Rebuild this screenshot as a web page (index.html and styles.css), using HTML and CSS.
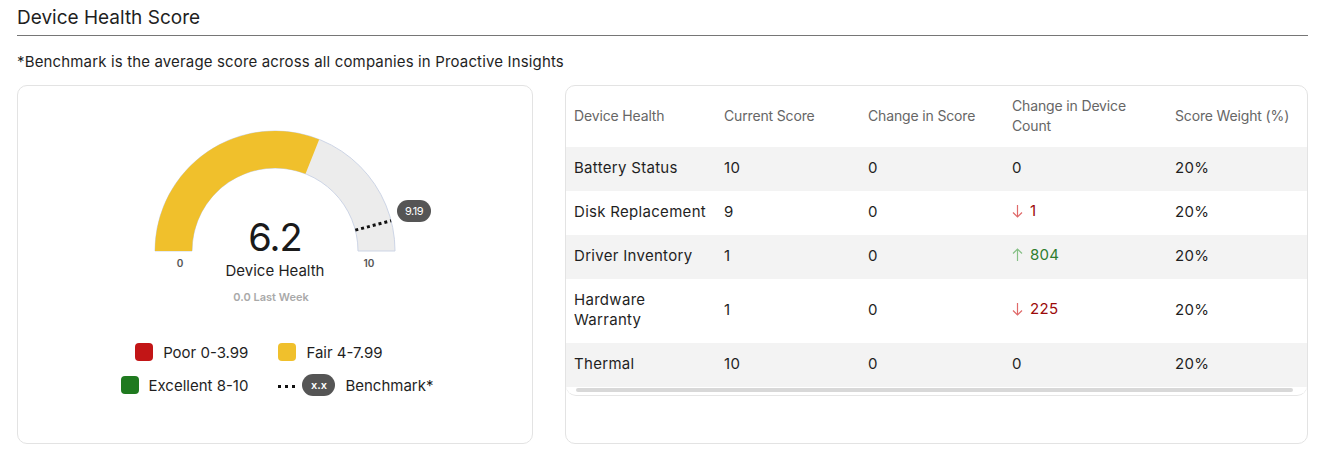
FILE: index.html
```html
<!DOCTYPE html>
<html lang="en">
<head>
<meta charset="utf-8">
<title>Device Health Score</title>
<link rel="stylesheet" href="styles.css">
</head>
<body>
<div class="page">
  <h1 class="title">Device Health Score</h1>
  <p class="note">*Benchmark is the average score across all companies in Proactive Insights</p>
  <div class="cards">
    <section class="card gauge-card">
      <div class="gauge">
        <svg class="gauge-svg" width="300" height="150" viewBox="0 0 300 150">
          <path d="M 30 131 A 120 120 0 0 1 270 131 L 233 131 A 83 83 0 0 0 67 131 Z" fill="#ececec" stroke="#cdd5e6" stroke-width="1"/>
          <path d="M 30 131 A 120 120 0 0 1 194.17 19.42 L 180.55 53.83 A 83 83 0 0 0 67 131 Z" fill="#f0c02c"/>
          <line x1="230.3" y1="110.1" x2="266.1" y2="100.8" stroke="#111" stroke-width="3" stroke-dasharray="3 3"/>
          <rect x="272" y="80" width="34" height="22" rx="11" fill="#555"/>
          <text x="289" y="95" text-anchor="middle" class="badge-text">9.19</text>
          <text x="55" y="147" text-anchor="middle" class="tick">0</text>
          <text x="244" y="147" text-anchor="middle" class="tick">10</text>
        </svg>
        <div class="score">6.2</div>
        <div class="score-label">Device Health</div>
      </div>
      <div class="last-week">0.0 Last Week</div>
      <div class="legend">
        <div class="legend-item end"><span class="swatch poor"></span>Poor 0-3.99</div>
        <div class="legend-item"><span class="swatch fair"></span>Fair 4-7.99</div>
        <div class="legend-item end"><span class="swatch excellent"></span>Excellent 8-10</div>
        <div class="legend-item"><span class="dots"></span><span class="pill">x.x</span>Benchmark*</div>
      </div>
    </section>
    <section class="card table-card">
      <div class="table-wrap">
        <table class="health-table">
          <colgroup>
            <col class="c1"><col class="c2"><col class="c3"><col class="c4"><col class="c5">
          </colgroup>
          <thead>
            <tr>
              <th>Device Health</th>
              <th>Current Score</th>
              <th>Change in Score</th>
              <th>Change in Device<br>Count</th>
              <th>Score Weight (%)</th>
            </tr>
          </thead>
          <tbody>
            <tr class="alt">
              <td>Battery Status</td><td>10</td><td>0</td><td>0</td><td>20%</td>
            </tr>
            <tr>
              <td>Disk Replacement</td><td>9</td><td>0</td>
              <td><span class="chg down"><svg class="arrow" width="11" height="14" viewBox="0 0 11 14"><path d="M5.5 1 V13 M1 8.5 L5.5 13 L10 8.5" fill="none" stroke="currentColor" stroke-width="1.2"/></svg><span class="val">1</span></span></td>
              <td>20%</td>
            </tr>
            <tr class="alt">
              <td>Driver Inventory</td><td>1</td><td>0</td>
              <td><span class="chg up"><svg class="arrow" width="11" height="14" viewBox="0 0 11 14"><path d="M5.5 13 V1 M1 5.5 L5.5 1 L10 5.5" fill="none" stroke="currentColor" stroke-width="1.2"/></svg><span class="val">804</span></span></td>
              <td>20%</td>
            </tr>
            <tr class="tall">
              <td>Hardware<br>Warranty</td><td>1</td><td>0</td>
              <td><span class="chg down"><svg class="arrow" width="11" height="14" viewBox="0 0 11 14"><path d="M5.5 1 V13 M1 8.5 L5.5 13 L10 8.5" fill="none" stroke="currentColor" stroke-width="1.2"/></svg><span class="val">225</span></span></td>
              <td>20%</td>
            </tr>
            <tr class="alt">
              <td>Thermal</td><td>10</td><td>0</td><td>0</td><td>20%</td>
            </tr>
          </tbody>
        </table>
        <div class="scrollbar"><div class="thumb"></div></div>
      </div>
    </section>
  </div>
</div>
</body>
</html>
```

FILE: styles.css
```css
* { box-sizing: border-box; }
html, body { margin: 0; padding: 0; background: #fff; }
body {
  font-family: Inter, Roboto, "Liberation Sans", Arial, sans-serif;
  color: #1f1f1f;
}
.page {
  padding: 0 11px 0 17px;
}
.title {
  margin: 0;
  font-size: 19px;
  font-weight: 400;
  line-height: 24px;
  padding-top: 6px;
  padding-bottom: 5px;
  border-bottom: 1px solid #767676;
  color: #1f1f1f;
}
.note {
  margin: 0;
  padding-top: 16px;
  font-size: 15px;
  line-height: 20px;
  color: #1f1f1f;
  letter-spacing: 0.15px;
}
.cards {
  display: grid;
  grid-template-columns: 516px 1fr;
  column-gap: 32px;
  margin-top: 13px;
  height: 359px;
}
.card {
  border: 1px solid #e3e3e3;
  border-radius: 10px;
  background: #fff;
}
.gauge-card {
  display: flex;
  flex-direction: column;
  align-items: center;
  padding-top: 34px;
}
.gauge {
  position: relative;
  width: 300px;
  height: 162px;
}
.gauge-svg { display: block; overflow: visible; }
.badge-text {
  font-family: Inter, Roboto, sans-serif;
  font-size: 11px;
  fill: #fff;
  letter-spacing: -0.5px;
}
.tick {
  font-family: Inter, Roboto, sans-serif;
  font-size: 10px;
  font-weight: 600;
  fill: #555;
}
.score {
  position: absolute;
  left: 0;
  right: 0;
  top: 97px;
  text-align: center;
  font-size: 38px;
  line-height: 40px;
  color: #1a1a1a;
  letter-spacing: -1px;
}
.score-label {
  position: absolute;
  left: 0;
  right: 0;
  top: 142px;
  text-align: center;
  font-size: 15px;
  line-height: 18px;
  color: #1f1f1f;
}
.last-week {
  margin-top: 8px;
  margin-right: 8px;
  font-size: 11px;
  line-height: 14px;
  font-weight: 600;
  color: #a9a9a9;
}
.legend {
  margin-top: 38px;
  display: grid;
  grid-template-columns: auto auto;
  justify-content: center;
  column-gap: 30px;
  row-gap: 13px;
  align-self: stretch;
  padding-left: 4px;
}
.legend-item {
  display: flex;
  align-items: center;
  height: 20px;
  font-size: 15px;
  color: #1f1f1f;
  white-space: nowrap;
}
.legend-item.end { justify-self: end; }
.swatch {
  width: 18px;
  height: 18px;
  border-radius: 4px;
  margin-right: 10px;
  display: inline-block;
}
.poor { background: #c21516; }
.fair { background: #f0c02c; }
.excellent { background: #1f7a1f; }
.dots {
  width: 17px;
  height: 3px;
  margin-right: 7px;
  background-image: linear-gradient(to right, #111 0 3px, transparent 3px 7px);
  background-size: 7px 3px;
  background-repeat: repeat-x;
  margin-top: 3px;
}
.pill {
  display: inline-flex;
  align-items: center;
  justify-content: center;
  width: 33px;
  height: 22px;
  border-radius: 11px;
  background: #555;
  color: #fff;
  font-size: 11px;
  font-weight: 600;
  margin-right: 10px;
}
.table-card {
  overflow: hidden;
}
.table-wrap {
  border-bottom: 1px solid #e6e6e6;
  border-radius: 0 0 10px 10px;
  padding-bottom: 3px;
}
.health-table {
  width: 100%;
  border-collapse: collapse;
  table-layout: fixed;
}
.c1 { width: 150px; }
.c2 { width: 144px; }
.c3 { width: 144px; }
.c4 { width: 163px; }
.health-table th {
  text-align: left;
  font-weight: 400;
  font-size: 14px;
  line-height: 20px;
  color: #666;
  padding: 0 8px 1px;
  height: 61px;
  vertical-align: middle;
  letter-spacing: -0.15px;
}
.health-table td {
  font-size: 15px;
  line-height: 20px;
  color: #1f1f1f;
  padding: 0 8px 3px;
  height: 44px;
  vertical-align: middle;
  letter-spacing: 0.3px;
}
.health-table tr.tall td { height: 64px; }
.health-table tr.alt td { background: #f3f3f3; }
.chg {
  display: inline-flex;
  align-items: center;
}
.arrow {
  display: block;
  margin-right: 7px;
}
.down .arrow { color: #e06a6a; }
.down .val { color: #9c0a0a; }
.up .arrow { color: #86c086; }
.up .val { color: #2e7d2e; }
.scrollbar {
  padding: 1px 14px 0 10px;
}
.thumb {
  height: 4px;
  border-radius: 2px;
  background: #d8d8d8;
}
```
